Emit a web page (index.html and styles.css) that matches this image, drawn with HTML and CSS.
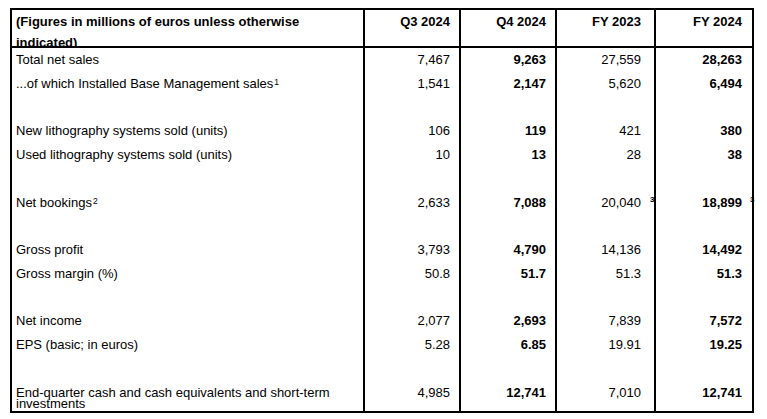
FILE: index.html
```html
<!DOCTYPE html>
<html lang="en">
<head>
<meta charset="utf-8">
<title>Key figures</title>
<link rel="stylesheet" href="styles.css">
</head>
<body>
<div class="page">
  <div class="fin">
    <div class="row head">
      <div class="cell label">(Figures in millions of euros unless otherwise<br>indicated)</div>
      <div class="cell num c2">Q3 2024</div>
      <div class="cell num c3">Q4 2024</div>
      <div class="cell num c4">FY 2023</div>
      <div class="cell num c5">FY 2024</div>
    </div>

    <div class="row">
      <div class="cell label">Total net sales</div>
      <div class="cell num c2">7,467</div>
      <div class="cell num c3 b">9,263</div>
      <div class="cell num c4">27,559</div>
      <div class="cell num c5 b">28,263</div>
    </div>
    <div class="row">
      <div class="cell label">...of which Installed Base Management sales<span class="fn">1</span></div>
      <div class="cell num c2">1,541</div>
      <div class="cell num c3 b">2,147</div>
      <div class="cell num c4">5,620</div>
      <div class="cell num c5 b">6,494</div>
    </div>
    <div class="row blank">
      <div class="cell label"></div><div class="cell num c2"></div><div class="cell num c3"></div><div class="cell num c4"></div><div class="cell num c5"></div>
    </div>

    <div class="row">
      <div class="cell label">New lithography systems sold (units)</div>
      <div class="cell num c2">106</div>
      <div class="cell num c3 b">119</div>
      <div class="cell num c4">421</div>
      <div class="cell num c5 b">380</div>
    </div>
    <div class="row">
      <div class="cell label">Used lithography systems sold (units)</div>
      <div class="cell num c2">10</div>
      <div class="cell num c3 b">13</div>
      <div class="cell num c4">28</div>
      <div class="cell num c5 b">38</div>
    </div>
    <div class="row blank">
      <div class="cell label"></div><div class="cell num c2"></div><div class="cell num c3"></div><div class="cell num c4"></div><div class="cell num c5"></div>
    </div>

    <div class="row">
      <div class="cell label">Net bookings<span class="fn">2</span></div>
      <div class="cell num c2">2,633</div>
      <div class="cell num c3 b">7,088</div>
      <div class="cell num c4">20,040<span class="fn3 g4">3</span></div>
      <div class="cell num c5 b">18,899<span class="fn3 g5">3</span></div>
    </div>
    <div class="row blank">
      <div class="cell label"></div><div class="cell num c2"></div><div class="cell num c3"></div><div class="cell num c4"></div><div class="cell num c5"></div>
    </div>

    <div class="row">
      <div class="cell label">Gross profit</div>
      <div class="cell num c2">3,793</div>
      <div class="cell num c3 b">4,790</div>
      <div class="cell num c4">14,136</div>
      <div class="cell num c5 b">14,492</div>
    </div>
    <div class="row">
      <div class="cell label">Gross margin (%)</div>
      <div class="cell num c2">50.8</div>
      <div class="cell num c3 b">51.7</div>
      <div class="cell num c4">51.3</div>
      <div class="cell num c5 b">51.3</div>
    </div>
    <div class="row blank">
      <div class="cell label"></div><div class="cell num c2"></div><div class="cell num c3"></div><div class="cell num c4"></div><div class="cell num c5"></div>
    </div>

    <div class="row">
      <div class="cell label">Net income</div>
      <div class="cell num c2">2,077</div>
      <div class="cell num c3 b">2,693</div>
      <div class="cell num c4">7,839</div>
      <div class="cell num c5 b">7,572</div>
    </div>
    <div class="row">
      <div class="cell label">EPS (basic; in euros)</div>
      <div class="cell num c2">5.28</div>
      <div class="cell num c3 b">6.85</div>
      <div class="cell num c4">19.91</div>
      <div class="cell num c5 b">19.25</div>
    </div>
    <div class="row blank">
      <div class="cell label"></div><div class="cell num c2"></div><div class="cell num c3"></div><div class="cell num c4"></div><div class="cell num c5"></div>
    </div>

    <div class="row last">
      <div class="cell label two">End-quarter cash and cash equivalents and short-term investments</div>
      <div class="cell num c2">4,985</div>
      <div class="cell num c3 b">12,741</div>
      <div class="cell num c4">7,010</div>
      <div class="cell num c5 b">12,741</div>
    </div>
  </div>
</div>
</body>
</html>
```

FILE: styles.css
```css
html, body {
  margin: 0;
  padding: 0;
  background: #ffffff;
}

body {
  font-family: "Liberation Sans", Arial, sans-serif;
  font-size: 13px;
  color: #000000;
}

.page {
  padding: 8px 0 0 10px;
}

.fin {
  width: 740px;
  border: 2px solid #000000;
}

.row {
  display: grid;
  grid-template-columns: 351px 96px 96px 99px 98px;
  height: 23.75px;
  line-height: 23.75px;
}

.row.head {
  height: 36px;
  line-height: 21px;
  border-bottom: 2px solid #000000;
  font-weight: bold;
}

.row.last {
  height: 30.5px;
}

.cell {
  overflow: hidden;
  white-space: nowrap;
}

.row.head .cell {
  padding-top: 1px;
}

.label {
  padding-left: 4px;
  padding-right: 4px;
}

.label.two {
  white-space: normal;
  line-height: 11.5px;
  padding-top: 6px;
}

.num {
  text-align: right;
  border-left: 2px solid #000000;
  overflow: visible;
}

.c2 { padding-right: 9px; }
.c3 { padding-right: 9px; }
.c4 { padding-right: 13px; }
.c5 { padding-right: 10px; }

.b {
  font-weight: bold;
}

.fn {
  font-size: 8.5px;
  line-height: 1;
  vertical-align: 3px;
  margin-left: 1px;
}

.fn3 {
  display: inline-block;
  width: 4px;
  text-align: left;
  font-size: 8px;
  font-weight: bold;
  line-height: 1;
  vertical-align: 5px;
}

.fn3.g4 {
  margin-left: 9px;
  margin-right: -13px;
}

.fn3.g5 {
  margin-left: 8px;
  margin-right: -12px;
}
```
